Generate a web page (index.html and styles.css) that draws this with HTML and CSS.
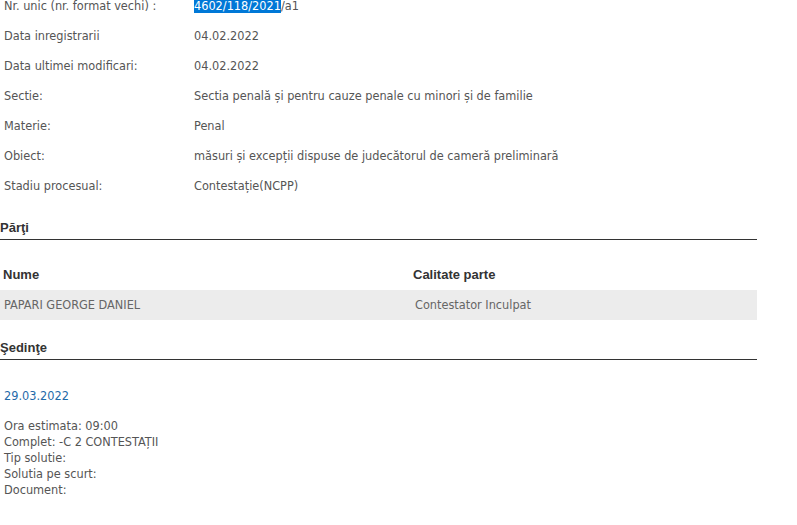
FILE: index.html
```html
<!DOCTYPE html>
<html lang="ro">
<head>
<meta charset="utf-8">
<title>Dosar</title>
<link rel="stylesheet" href="styles.css">
</head>
<body>
<div class="page">
  <div class="details">
    <div class="row"><div class="label">Nr. unic (nr. format vechi) :</div><div class="value"><span class="sel">4602/118/2021</span>/a1</div></div>
    <div class="row"><div class="label">Data inregistrarii</div><div class="value">04.02.2022</div></div>
    <div class="row"><div class="label">Data ultimei modificari:</div><div class="value">04.02.2022</div></div>
    <div class="row"><div class="label">Sectie:</div><div class="value">Sectia penală și pentru cauze penale cu minori și de familie</div></div>
    <div class="row"><div class="label">Materie:</div><div class="value">Penal</div></div>
    <div class="row"><div class="label">Obiect:</div><div class="value">măsuri și excepții dispuse de judecătorul de cameră preliminară</div></div>
    <div class="row"><div class="label">Stadiu procesual:</div><div class="value">Contestație(NCPP)</div></div>
  </div>

  <h2 class="section-title first">Părţi</h2>
  <div class="parties">
    <div class="prow head"><div class="c1">Nume</div><div class="c2">Calitate parte</div></div>
    <div class="prow alt"><div class="c1">PAPARI GEORGE DANIEL</div><div class="c2">Contestator Inculpat</div></div>
  </div>

  <h2 class="section-title">Şedinţe</h2>
  <div class="session">
    <div class="date">29.03.2022</div>
    <div class="info">
      <div>Ora estimata: 09:00</div>
      <div>Complet: -C 2 CONTESTAȚII</div>
      <div>Tip solutie:</div>
      <div>Solutia pe scurt:</div>
      <div>Document:</div>
    </div>
  </div>
</div>
</body>
</html>
```

FILE: styles.css
```css
html, body {
  margin: 0;
  padding: 0;
  background: #fff;
}
body {
  font-family: "DejaVu Sans Condensed", "DejaVu Sans", sans-serif;
  font-size: 12.6px;
  color: #555;
}
.page {
  width: 757px;
  margin-top: -9px;
}
.row {
  display: flex;
  height: 30px;
  line-height: 30px;
}
.label {
  width: 194px;
  padding-left: 4px;
  box-sizing: border-box;
}
.value {
  flex: 1;
}
.sel {
  background: #0078d7;
  color: #fff;
}
.section-title {
  margin: 20px 0 0 0;
  font-family: "Liberation Sans", Arial, sans-serif;
  font-size: 13px;
  font-weight: bold;
  color: #333;
  line-height: 16px;
  padding-bottom: 3px;
  border-bottom: 1px solid #333;
}
.section-title.first {
  margin-top: 19px;
}
.parties {
  margin-top: 20px;
}
.prow {
  display: flex;
  height: 30px;
  line-height: 30px;
}
.prow .c1 {
  width: 410px;
  padding-left: 4px;
  box-sizing: border-box;
}
.prow .c2 {
  flex: 1;
  padding-left: 5px;
}
.prow.head {
  font-family: "Liberation Sans", Arial, sans-serif;
  font-weight: bold;
  font-size: 13px;
  color: #333;
}
.prow.head .c1 { padding-left: 3px; }
.prow.head .c2 { padding-left: 3px; }
.prow.alt {
  background: #ececec;
  color: #666;
}
.session {
  padding-left: 4px;
  line-height: 16px;
}
.date {
  margin-top: 28px;
  color: #1f6aa8;
}
.info {
  margin-top: 14px;
}
```
